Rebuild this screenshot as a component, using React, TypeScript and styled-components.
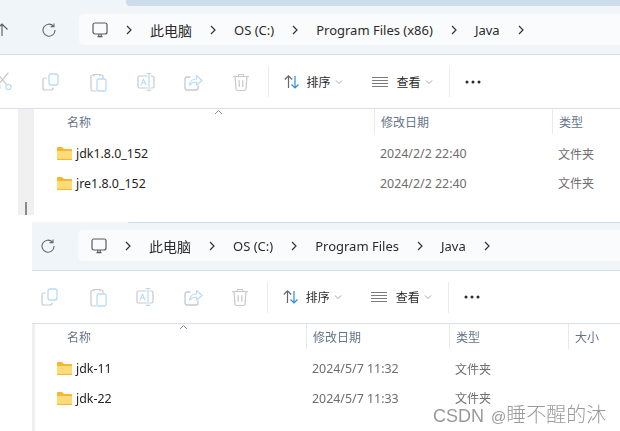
import React from "react";
import styled, { createGlobalStyle } from "styled-components";

const GlobalStyle = createGlobalStyle`
  html, body {
    margin: 0;
    padding: 0;
    background: #fff;
    overflow: hidden;
  }
  body {
    font-family: "Noto Sans", "Noto Sans CJK SC", sans-serif;
    color: #1f1f1f;
  }
`;

const Page = styled.div`
  position: relative;
  width: 620px;
  height: 431px;
  overflow: hidden;
  filter: blur(0.35px);
`;

const Window = styled.section<{ $left: number; $top: number; $height: number }>`
  margin: ${(p) => p.$top}px 0 0 ${(p) => p.$left}px;
  height: ${(p) => p.$height}px;
  display: flex;
  flex-direction: column;
  overflow: hidden;
`;

const TabStrip = styled.div<{ $height: number; $tabLeft: number }>`
  flex: none;
  height: ${(p) => p.$height}px;
  background: #f0f5f9;
  padding-left: ${(p) => p.$tabLeft}px;
`;

const ActiveTab = styled.div`
  height: 100%;
  background: #cddcea;
  border-bottom-left-radius: 4px;
`;

const Nav = styled.div<{ $height: number; $padTop: number }>`
  flex: none;
  height: ${(p) => p.$height}px;
  box-sizing: border-box;
  padding-top: ${(p) => p.$padTop}px;
  background: #f0f5f9;
  border-bottom: 1px solid #d3dee9;
  display: flex;
  align-items: flex-start;
`;

const NavButtons = styled.div<{ $width: number }>`
  flex: 0 0 ${(p) => p.$width}px;
  min-width: 0;
  height: 31px;
  box-sizing: border-box;
  padding-right: 23px;
  display: flex;
  justify-content: flex-end;
  align-items: center;
  gap: 33px;
  color: #5a5a5a;
`;

const Breadcrumb = styled.div`
  flex: 1;
  height: 31px;
  box-sizing: border-box;
  padding-left: 13px;
  background: #f9fbfd;
  border-radius: 5px 0 0 5px;
  display: flex;
  align-items: center;
  gap: 17px;
  font-size: 13px;
  color: #2b2b2b;
  white-space: nowrap;
`;

const CrumbText = styled.span<{ $cjk: boolean }>`
  font-size: ${(p) => (p.$cjk ? 14 : 13)}px;
`;

const Toolbar = styled.div<{ $height: number; $shift: number }>`
  flex: none;
  height: ${(p) => p.$height}px;
  margin-left: ${(p) => p.$shift}px;
  background: #fff;
  display: flex;
  align-items: center;
`;

const ToolSlot = styled.div`
  flex: 0 0 47.5px;
  display: flex;
  justify-content: center;
`;

const ToolDivider = styled.div`
  flex: none;
  width: 1px;
  height: 31px;
  margin: 0 15px 0 3px;
  background: #ececec;
`;

const MenuButton = styled.div<{ $after: number }>`
  display: flex;
  align-items: center;
  margin-right: ${(p) => p.$after}px;
  font-size: 12px;
  color: #2b2b2b;
`;

const MenuLabel = styled.span<{ $gap: number }>`
  margin: 0 4px 0 ${(p) => p.$gap}px;
`;

const Rule = styled.div`
  flex: none;
  height: 1px;
  background: #d7e0ee;
`;

const Body = styled.div`
  flex: 1;
  min-height: 0;
  display: flex;
  background: #fff;
`;

const Gutter = styled.div<{ $gutter: number; $width: number }>`
  flex: none;
  position: relative;
  width: ${(p) => p.$width}px;
  margin-left: ${(p) => p.$gutter}px;
  background: #f0f0f0;
`;

const ScrollThumb = styled.div`
  position: absolute;
  left: 7px;
  bottom: 0;
  width: 2px;
  height: 13px;
  background: #8a8a8a;
`;

const List = styled.div<{ $columns: string }>`
  flex: 1;
  position: relative;
  display: grid;
  grid-template-columns: ${(p) => p.$columns};
  grid-auto-rows: 29.5px;
  grid-template-rows: 26px;
  align-content: start;
  font-size: 12.4px;
`;

const SortCaret = styled.svg<{ $left: number }>`
  position: absolute;
  top: 0;
  left: ${(p) => p.$left}px;
  width: 9px;
  height: 6px;
`;

const HeadCell = styled.div<{ $pad: number; $first?: boolean }>`
  height: 25px;
  box-sizing: border-box;
  padding-left: ${(p) => p.$pad}px;
  margin-bottom: 4px;
  display: flex;
  align-items: center;
  font-size: 12px;
  color: #667487;
  border-left: ${(p) => (p.$first ? "none" : "1px solid #e6e9ee")};
  overflow: hidden;
  white-space: nowrap;
`;

const Cell = styled.div<{ $pad: number; $muted?: boolean }>`
  position: relative;
  top: 4px;
  padding-left: ${(p) => p.$pad}px;
  display: flex;
  align-items: center;
  gap: 4px;
  color: ${(p) => (p.$muted ? "#6e6e6e" : "#242424")};
  white-space: nowrap;
`;

const TypeCell = styled(Cell)`
  font-size: 12px;
`;

const Watermark = styled.div`
  position: absolute;
  left: 433px;
  top: 399px;
  display: flex;
  align-items: baseline;
  font-family: "Liberation Sans", "Noto Sans CJK SC", sans-serif;
  font-size: 18px;
  color: rgba(110, 110, 110, 0.7);
  white-space: nowrap;
`;

const WatermarkAt = styled.span`
  margin-left: 7px;
  font-size: 15px;
`;

const WatermarkName = styled.span`
  font-family: "Noto Sans CJK SC", sans-serif;
  font-size: 20px;
  font-weight: 300;
`;

const GRAY = "#c9c9c9";
const BLUE = "#b9dcf6";

const Svg = ({ size = 20, children }: { size?: number; children: React.ReactNode }) => (
  <svg width={size} height={size} viewBox="0 0 20 20" fill="none" strokeLinecap="round" strokeLinejoin="round">
    {children}
  </svg>
);

const UpIcon = () => (
  <svg width="14" height="16" viewBox="0 0 14 16" fill="none" stroke="#5a5a5a" strokeWidth="1.1" style={{ flex: "none" }}>
    <path d="M7 14V2M1.5 7.5 7 2l5.5 5.5" />
  </svg>
);

const RefreshIcon = () => (
  <svg width="14" height="14" viewBox="0 0 14 14" fill="none" stroke="#666" strokeWidth="1.1" style={{ flex: "none" }}>
    <path d="M11.5 3.2A6 6 0 1 0 13 7" />
    <path d="M8.6 3.6h3.4V.6" />
  </svg>
);

const PcIcon = () => (
  <svg width="16" height="16" viewBox="0 0 16 16" fill="none" stroke="#5b5b5b" strokeWidth="1.2" style={{ flex: "none" }}>
    <rect x="1" y="1" width="14" height="11" rx="2" />
    <path d="M5.5 14.6h5M6.8 12v2.4M9.2 12v2.4" />
  </svg>
);

const Crumb = () => (
  <svg width="8" height="10" viewBox="0 0 8 10" fill="none" stroke="#333" strokeWidth="1.2" style={{ flex: "none" }}>
    <path d="M2 1l4 4-4 4" />
  </svg>
);

const Down = () => (
  <svg width="8" height="6" viewBox="0 0 8 6" fill="none" stroke="#9a9a9a" strokeWidth="0.9">
    <path d="M1 1.5l3 3 3-3" />
  </svg>
);

const CutIcon = () => (
  <Svg>
    <path d="M4 1l9 11M15 1 6 12" stroke={GRAY} strokeWidth="1.2" />
    <circle cx="4.5" cy="15" r="2.6" stroke={BLUE} strokeWidth="1.2" />
    <circle cx="15.5" cy="15" r="2.6" stroke={BLUE} strokeWidth="1.2" />
  </Svg>
);

const CopyIcon = () => (
  <Svg>
    <path d="M5 6H4a2 2 0 0 0-2 2v8a2 2 0 0 0 2 2h6a2 2 0 0 0 2-2" stroke={GRAY} strokeWidth="1.2" />
    <rect x="8" y="2" width="9" height="11" rx="2" stroke={BLUE} strokeWidth="1.3" />
  </Svg>
);

const PasteIcon = () => (
  <Svg>
    <path d="M6 3H4.5A1.5 1.5 0 0 0 3 4.5v13A1.5 1.5 0 0 0 4.5 19H8" stroke={GRAY} strokeWidth="1.2" />
    <path d="M6 4V2.5h6V4M12 3h1.5A1.5 1.5 0 0 1 15 4.5V6" stroke={GRAY} strokeWidth="1.2" />
    <rect x="9" y="7" width="9" height="12" rx="1.5" stroke={BLUE} strokeWidth="1.3" />
  </Svg>
);

const RenameIcon = () => (
  <Svg>
    <path d="M11 4H3.5A1.5 1.5 0 0 0 2 5.5v9A1.5 1.5 0 0 0 3.5 16H11M15 4h1.5A1.5 1.5 0 0 1 18 5.5v9a1.5 1.5 0 0 1-1.5 1.5H15" stroke={GRAY} strokeWidth="1.2" />
    <path d="M5 13l2.5-6L10 13M6 11h3" stroke={BLUE} strokeWidth="1.1" />
    <path d="M13 2v16M11 1.5h4M11 18.5h4" stroke={BLUE} strokeWidth="1.2" />
  </Svg>
);

const ShareIcon = () => (
  <Svg>
    <path d="M7 5H4a2 2 0 0 0-2 2v9a2 2 0 0 0 2 2h9a2 2 0 0 0 2-2v-2" stroke={GRAY} strokeWidth="1.3" />
    <path d="M6.5 13c.5-4 3-6 7-6V3.5L19 8.500 13.500 13V10c-3 0-5 1-7 3z" stroke={BLUE} strokeWidth="1.2" />
  </Svg>
);

const TrashIcon = () => (
  <Svg>
    <path d="M2.500 4.500h15M7.500 4.500V2.500h5v2M4 4.500 5 17a1.500 1.500 0 0 0 1.500 1.500h7A1.500 1.500 0 0 0 15 17l1-12.500" stroke={GRAY} strokeWidth="1.2" />
    <path d="M8.200 8.500v6M11.800 8.500v6" stroke={GRAY} strokeWidth="1.2" />
  </Svg>
);

const SortIcon = () => (
  <svg width="16" height="16" viewBox="0 0 16 16" fill="none" strokeWidth="1.2">
    <path d="M4.500 14V2M.8 5.500 4.500 1.800l3.700 3.700" stroke="#666" />
    <path d="M11 2v12M7.500 10.500l3.500 3.500 3.500-3.500" stroke="#2b8fdc" />
  </svg>
);

const ViewIcon = () => (
  <svg width="16" height="12" viewBox="0 0 16 12" stroke="#7c7c7c" strokeWidth="1.1">
    <path d="M0 1.500h16M0 4.500h16M0 7.500h16M0 10.500h16" />
  </svg>
);

const DotsIcon = () => (
  <svg width="16" height="4" viewBox="0 0 16 4" fill="#2a2a2a">
    <circle cx="2" cy="2" r="1.500" />
    <circle cx="8" cy="2" r="1.500" />
    <circle cx="14" cy="2" r="1.500" />
  </svg>
);

const FolderIcon = () => (
  <svg width="15" height="13" viewBox="0 0 15 13" style={{ flex: "none" }}>
    <path d="M0 1a1 1 0 0 1 1-1h4l2 2h7a1 1 0 0 1 1 1v9a1 1 0 0 1-1 1H1a1 1 0 0 1-1-1z" fill="#f4b731" />
    <path d="M0 4h14a1 1 0 0 1 1 1v7a1 1 0 0 1-1 1H1a1 1 0 0 1-1-1z" fill="#fedb79" />
    <path d="M0 12h15v.200a.800.800 0 0 1-.800.800H.800a.800.800 0 0 1-.800-.800z" fill="#f2b632" />
  </svg>
);

interface IFolder {
  name: string;
  modified: string;
}

interface IWindow {
  left: number;
  top: number;
  height: number;
  tabHeight: number;
  tabLeft: number;
  navHeight: number;
  navPad: number;
  buttonsWidth: number;
  toolHeight: number;
  toolShift: number;
  clipped: boolean;
  gutter: number;
  sidebar: number;
  columns: string;
  caretLeft: number;
  namePad: number;
  folderPad: number;
  path: string[];
  heads: string[];
  folders: IFolder[];
}

const windows: IWindow[] = [
  {
    left: 0,
    top: 0,
    height: 215,
    tabHeight: 6,
    tabLeft: 126,
    navHeight: 49,
    navPad: 8,
    buttonsWidth: 79,
    toolHeight: 53,
    toolShift: -20.5,
    clipped: true,
    gutter: 18,
    sidebar: 16,
    columns: "340px 178px 1fr",
    caretLeft: 180,
    namePad: 33,
    folderPad: 23,
    path: ["此电脑", "OS (C:)", "Program Files (x86)", "Java"],
    heads: ["名称", "修改日期", "类型"],
    folders: [
      { name: "jdk1.8.0_152", modified: "2024/2/2 22:40" },
      { name: "jre1.8.0_152", modified: "2024/2/2 22:40" },
    ],
  },
  {
    left: 32,
    top: 7,
    height: 209,
    tabHeight: 1,
    tabLeft: 96,
    navHeight: 48,
    navPad: 7,
    buttonsWidth: 46,
    toolHeight: 52,
    toolShift: -5.75,
    clipped: false,
    gutter: 0,
    sidebar: 3,
    columns: "271px 143px 119px 1fr",
    caretLeft: 144,
    namePad: 32,
    folderPad: 22,
    path: ["此电脑", "OS (C:)", "Program Files", "Java"],
    heads: ["名称", "修改日期", "类型", "大小"],
    folders: [
      { name: "jdk-11", modified: "2024/5/7 11:32" },
      { name: "jdk-22", modified: "2024/5/7 11:33" },
    ],
  },
];

const Explorer = ({ win }: { win: IWindow }) => (
  <Window $left={win.left} $top={win.top} $height={win.height}>
    <TabStrip $height={win.tabHeight} $tabLeft={win.tabLeft}>
      <ActiveTab />
    </TabStrip>
    <Nav $height={win.navHeight} $padTop={win.navPad}>
      <NavButtons $width={win.buttonsWidth}>
        {win.clipped && <UpIcon />}
        <RefreshIcon />
      </NavButtons>
      <Breadcrumb>
        <PcIcon />
        <Crumb />
        {win.path.map((part, i) => (
          <React.Fragment key={part}>
            <CrumbText $cjk={i === 0}>{part}</CrumbText>
            <Crumb />
          </React.Fragment>
        ))}
      </Breadcrumb>
    </Nav>
    <Toolbar $height={win.toolHeight} $shift={win.toolShift}>
      {win.clipped && <ToolSlot><CutIcon /></ToolSlot>}
      <ToolSlot><CopyIcon /></ToolSlot>
      <ToolSlot><PasteIcon /></ToolSlot>
      <ToolSlot><RenameIcon /></ToolSlot>
      <ToolSlot><ShareIcon /></ToolSlot>
      <ToolSlot><TrashIcon /></ToolSlot>
      <ToolDivider />
      <MenuButton $after={29}>
        <SortIcon />
        <MenuLabel $gap={7}>排序</MenuLabel>
        <Down />
      </MenuButton>
      <MenuButton $after={13}>
        <ViewIcon />
        <MenuLabel $gap={9}>查看</MenuLabel>
        <Down />
      </MenuButton>
      <ToolDivider />
      <DotsIcon />
    </Toolbar>
    <Rule />
    <Body>
      <Gutter $gutter={win.gutter} $width={win.sidebar}>
        {win.clipped && <ScrollThumb />}
      </Gutter>
      <List $columns={win.columns}>
        <SortCaret $left={win.caretLeft} viewBox="0 0 9 6" fill="none" stroke="#8a8a8a" strokeWidth="1">
          <path d="M1 5l3.500-3.500L8 5" />
        </SortCaret>
        {win.heads.map((head, i) => (
          <HeadCell key={head} $first={i === 0} $pad={i === 0 ? win.namePad : 6}>
            {head}
          </HeadCell>
        ))}
        {win.folders.map((folder) => (
          <React.Fragment key={folder.name}>
            <Cell $pad={win.folderPad}>
              <FolderIcon />
              {folder.name}
            </Cell>
            <Cell $pad={6} $muted>{folder.modified}</Cell>
            <TypeCell $pad={6} $muted>文件夹</TypeCell>
            {win.heads.length > 3 && <div />}
          </React.Fragment>
        ))}
      </List>
    </Body>
  </Window>
);

const App = () => (
  <Page>
    <GlobalStyle />
    {windows.map((win) => (
      <Explorer key={win.left} win={win} />
    ))}
    <Watermark>
      CSDN
      <WatermarkAt>@</WatermarkAt>
      <WatermarkName>睡不醒的沐</WatermarkName>
    </Watermark>
  </Page>
);

export default App;
